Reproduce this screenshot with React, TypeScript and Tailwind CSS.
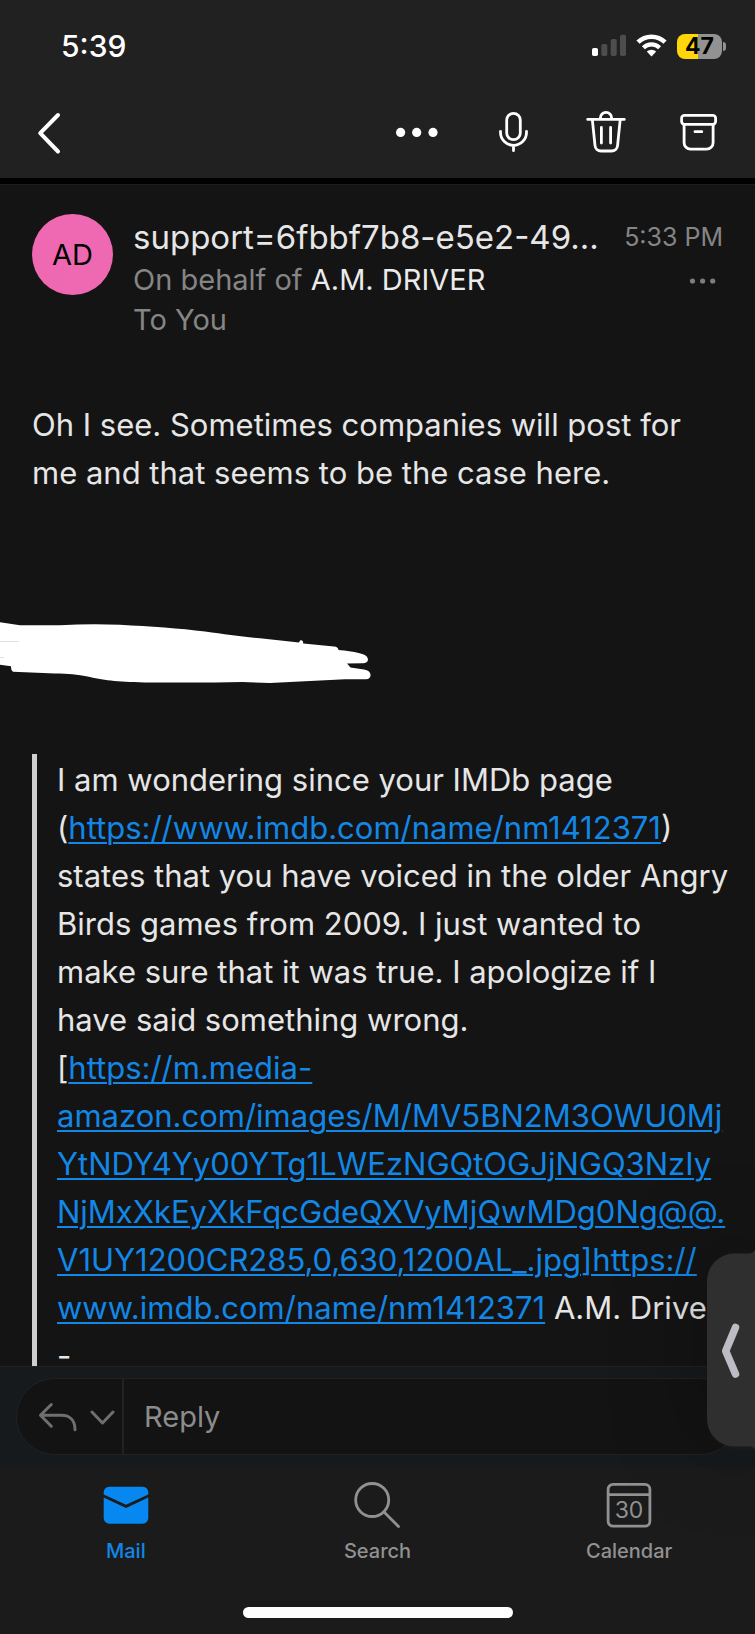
import React from "react";

const SignalIcon = () => (
  <svg width="34" height="24" viewBox="0 0 34 24" aria-hidden="true">
    <rect x="0" y="14" width="6" height="8" rx="1.8" fill="#fff" />
    <rect x="9.3" y="10" width="6" height="12" rx="1.8" fill="#4d4d4d" />
    <rect x="18.7" y="5" width="6" height="17" rx="1.8" fill="#4d4d4d" />
    <rect x="28" y="0.7" width="6" height="21.3" rx="1.8" fill="#4d4d4d" />
  </svg>
);

const WifiIcon = () => (
  <svg width="31" height="24" viewBox="0 0 31 24" fill="none" aria-hidden="true">
    <path d="M2 8.2A19.3 19.3 0 0 1 29 8.2" stroke="#fff" strokeWidth="4.6" />
    <path d="M7.4 13.7A11.7 11.7 0 0 1 23.6 13.7" stroke="#fff" strokeWidth="4.2" />
    <path d="M10.8 17.6A6.6 6.6 0 0 1 20.2 17.6L15.5 22.6Z" fill="#fff" />
  </svg>
);

const Battery = () => (
  <div className="flex items-center gap-px">
    <div className="flex h-[25px] w-[45px] items-center justify-center rounded-[8px] bg-linear-to-r from-[#ffd60a] from-47% to-[#929292] to-47% text-[23px] leading-none font-bold text-black">
      47
    </div>
    <div className="h-[9px] w-[3px] rounded-r-full bg-[#929292]" />
  </div>
);

const iconButton = "flex size-12 items-center justify-center";

const Toolbar = () => (
  <nav className="flex h-[86px] items-center justify-between px-8 pb-1 pl-6" aria-label="Message actions">
    <button type="button" aria-label="Back" className={iconButton}>
      <svg width="48" height="48" viewBox="0 0 48 48" fill="none" stroke="#fff" strokeWidth="4" strokeLinecap="round" strokeLinejoin="round">
        <path d="M34 6 16.2 24.2 34 42.5" />
      </svg>
    </button>
    <div className="flex gap-[45px]">
      <button type="button" aria-label="More actions" className={iconButton}>
        <svg width="48" height="48" viewBox="0 0 48 48" fill="#fff">
          <circle cx="4.6" cy="23.4" r="4.6" />
          <circle cx="20.7" cy="23.4" r="4.6" />
          <circle cx="37" cy="23.4" r="4.6" />
        </svg>
      </button>
      <button type="button" aria-label="Dictate" className={iconButton}>
        <svg width="48" height="48" viewBox="0 0 48 48" fill="none" stroke="#fff" strokeWidth="2.8" strokeLinecap="round">
          <rect x="17.7" y="4.3" width="13.6" height="26.4" rx="6.8" />
          <path d="M11.5 22.3v1.2a13 12.8 0 0 0 26 0v-1.2M24.5 36.5v5.2" />
        </svg>
      </button>
      <button type="button" aria-label="Delete" className={iconButton}>
        <svg width="48" height="48" viewBox="0 0 48 48" fill="none" stroke="#fff" strokeWidth="2.8" strokeLinecap="round" strokeLinejoin="round">
          <path d="M5.7 10.4h36.6M18.4 10.4v-1.4a5.6 5.6 0 0 1 11.2 0v1.4" />
          <path d="M10.3 10.4 13 36.4a6 6 0 0 0 6 5.6h10.6a6 6 0 0 0 6-5.6L38.2 10.4" />
          <path d="M19.4 18.5v15.5M28.6 18.5v15.5" />
        </svg>
      </button>
      <button type="button" aria-label="Archive" className={iconButton}>
        <svg width="48" height="48" viewBox="0 0 48 48" fill="none" stroke="#fff" strokeWidth="2.8" strokeLinecap="round" strokeLinejoin="round">
          <rect x="6.6" y="6.4" width="34" height="9" rx="2.8" />
          <path d="M9.1 15.4v18.4a6.4 6.4 0 0 0 6.4 6.4h16.2a6.4 6.4 0 0 0 6.4-6.4V15.4M20 22.7h6.8" />
        </svg>
      </button>
    </div>
  </nav>
);

const Scribble = () => (
  <svg width="380" height="64" viewBox="0 0 380 64" className="block" aria-hidden="true">
    <path
      fill="#fff"
      d="M0 1.3 20 4.3 60 4.3 C80 3 100 2.8 120 3.8 C150 5.5 180 7.3 205 10.6 C225 13.3 240 15.8 260 17.2 L299 21.6 300 19.6Q301.500 18.500 303 20.500L303.200 22.600 L334 25.600Q338 26 338.500 29 C345 29.400 357 31 363 33.200Q368 35 368 39Q367.500 42 363 42.200L347 42.500 350.500 46.600 364 48.600Q370.600 49.600 370.600 54.500Q370 58 366 58.200L345 58.200 270 62 242 61 215 61.600 150 61.600 C120 61 105 59.500 90 56 C75 53 70 53 55 52.500L13 50.800Q10.800 49.500 11 45.200L0 43.800Z"
    />
    <path d="M0 20.500H19M0 36.500H4" stroke="#d9d9d9" strokeWidth="0.8" />
  </svg>
);

const MailIcon = () => (
  <svg width="46" height="46" viewBox="0 0 46 46" fill="#0788f0" aria-hidden="true">
    <path d="M0.700 10.600A5.500 5.500 0 0 1 6.200 4.700H39.800A5.500 5.500 0 0 1 45.300 10.600V12.400L23 22.800.7 12.400Z" />
    <path d="M.7 15.400 23 26 45.300 15.400V36A5.600 5.600 0 0 1 39.700 41.700H6.300A5.600 5.600 0 0 1 .7 36Z" />
  </svg>
);

const SearchIcon = () => (
  <svg width="46" height="46" viewBox="0 0 46 46" fill="none" stroke="#919191" strokeWidth="2.800" strokeLinecap="round" aria-hidden="true">
    <circle cx="18.200" cy="18" r="16.500" />
    <path d="M30 30 44.500 44.500" />
  </svg>
);

const CalendarIcon = () => (
  <svg width="46" height="46" viewBox="0 0 46 46" fill="none" stroke="#919191" strokeWidth="2.800" aria-hidden="true">
    <rect x="2.100" y="2.400" width="41.800" height="41.800" rx="5" />
    <path d="M2 12.700H44" />
    <text x="23" y="36" textAnchor="middle" fill="#919191" stroke="none" fontSize="23" fontWeight="400">
      30
    </text>
  </svg>
);

const tabs = [
  { label: "Mail", icon: <MailIcon />, active: true },
  { label: "Search", icon: <SearchIcon />, active: false },
  { label: "Calendar", icon: <CalendarIcon />, active: false },
];

const link = "text-[#1287e6] underline decoration-2 underline-offset-3";

export default function App() {
  return (
    <div className="relative flex h-screen flex-col overflow-hidden bg-[#141414] font-['Inter','Liberation_Sans',sans-serif] text-[#e6e6e6]">
      <header className="shrink-0 border-b-6 border-black bg-[#212121]">
        <div className="flex h-[92px] items-center justify-between pr-[29px] pl-[61px]">
          <time className="text-[30px] leading-none font-medium text-white">5:39</time>
          <div className="flex items-center gap-[10px]">
            <SignalIcon />
            <WifiIcon />
            <Battery />
          </div>
        </div>
        <Toolbar />
      </header>

      <main className="min-h-0 flex-1 overflow-hidden border-t border-[#1c1c1c]">
        <section className="flex items-start px-8 pt-[29px]">
          <div className="flex size-[81px] shrink-0 items-center justify-center rounded-full bg-[#ee69b1] text-[29px] text-black">
            AD
          </div>
          <div className="ml-5 min-w-0 flex-1">
            <div className="flex items-center justify-between">
              <h1 className="text-[33px] leading-[46px] whitespace-nowrap">support=6fbbf7b8-e5e2-49...</h1>
              <time className="text-[25px] leading-[46px] whitespace-nowrap text-[#858585]">5:33 PM</time>
            </div>
            <div className="flex items-center justify-between text-[29px] leading-10 text-[#858585]">
              <p>
                On behalf of <span className="text-[#ebebeb]">A.M. DRIVER</span>
              </p>
              <button type="button" aria-label="Message options" className="flex h-10 w-9 items-center">
                <svg width="30" height="8" viewBox="0 0 30 8" fill="#7d7d7d">
                  <circle cx="5.500" cy="5" r="2.600" />
                  <circle cx="15.600" cy="5" r="2.600" />
                  <circle cx="25.700" cy="5" r="2.600" />
                </svg>
              </button>
            </div>
            <p className="text-[29px] leading-10 text-[#858585]">To You</p>
          </div>
        </section>

        <p className="mt-[61px] px-8 text-[31px] leading-12 whitespace-nowrap">
          Oh I see. Sometimes companies will post for
          <br />
          me and that seems to be the case here.
        </p>

        <div className="mt-[124px]">
          <Scribble />
        </div>

        <blockquote className="mt-[69px] ml-8 border-l-5 border-[#cfcfcf] pt-[2px] pl-5 text-[31px] leading-12 whitespace-nowrap">
          I am wondering since your IMDb page
          <br />(
          <a href="https://www.imdb.com/name/nm1412371" className={link}>
            https://www.imdb.com/name/nm1412371
          </a>
          )<br />
          states that you have voiced in the older Angry
          <br />
          Birds games from 2009. I just wanted to
          <br />
          make sure that it was true. I apologize if I
          <br />
          have said something wrong.
          <br />[
          <a href="https://www.imdb.com/name/nm1412371" className={link}>
            https://m.media-
            <br />
            amazon.com/images/M/MV5BN2M3OWU0Mj
            <br />
            YtNDY4Yy00YTg1LWEzNGQtOGJjNGQ3NzIy
            <br />
            NjMxXkEyXkFqcGdeQXVyMjQwMDg0Ng@@.
            <br />
            V1UY1200CR285,0,630,1200AL_.jpg]https://
            <br />
            www.imdb.com/name/nm1412371
          </a>{" "}
          A.M. Driver
          <br />-
        </blockquote>
      </main>

      <div className="shrink-0 border-t border-[#222] bg-[#161a1c] px-4 pt-[11px] pb-3">
        <div className="flex h-[77px] overflow-hidden rounded-full border border-[#222] bg-[#131313]">
          <button type="button" aria-label="Reply options" className="flex w-[107px] shrink-0 items-center gap-[13px] border-r-2 border-[#222] pl-[21px]">
            <svg width="39" height="30" viewBox="0 0 39 30" fill="none" stroke="#6f6f6f" strokeWidth="3" strokeLinecap="round" strokeLinejoin="round">
              <path d="M13.300 2.500 2.500 13.300 13.300 24.300M2.500 13.300H23.500C32 13.300 37 18.500 37 27.800" />
            </svg>
            <svg width="25" height="16" viewBox="0 0 25 16" fill="none" stroke="#6f6f6f" strokeWidth="3" strokeLinecap="round" strokeLinejoin="round">
              <path d="M2 3 12.500 14 23 3" />
            </svg>
          </button>
          <button type="button" className="flex-1 pl-5 text-left text-[29px] text-[#8c8c8c]">
            Reply
          </button>
        </div>
      </div>

      <footer className="shrink-0 bg-[#1b1b1b] pt-[15px] pb-4">
        <nav className="grid grid-cols-3" aria-label="Main">
          {tabs.map((tab) => (
            <a
              key={tab.label}
              href="#"
              className={
                tab.active
                  ? "flex flex-col items-center gap-[7px] text-[20px] leading-8 font-medium text-[#1287e6]"
                  : "flex flex-col items-center gap-[7px] text-[20px] leading-8 font-medium text-[#919191]"
              }
            >
              {tab.icon}
              {tab.label}
            </a>
          ))}
        </nav>
        <div className="mx-auto mt-10 h-[11px] w-[270px] rounded-full bg-white" />
      </footer>

      <button
        type="button"
        aria-label="Open side panel"
        className="absolute right-0 bottom-[184px] h-[200px] w-12 rounded-l-[28px] shadow-[0_0_90px_rgba(0,0,0,0.35)]"
      >
        <svg width="48" height="200" viewBox="0 0 48 200" fill="none">
          <path d="M48 0Q46 3.500 41 3.500H28C12 3.500 0 16 0 32V168C0 184 12 196.500 28 196.500H43Q46.500 196.500 48 200Z" fill="#2f2f30" />
          <path d="M28.500 77.500 18.700 101 28.500 124" stroke="#bdbcc4" strokeWidth="7.500" strokeLinecap="round" strokeLinejoin="round" />
        </svg>
      </button>
    </div>
  );
}
